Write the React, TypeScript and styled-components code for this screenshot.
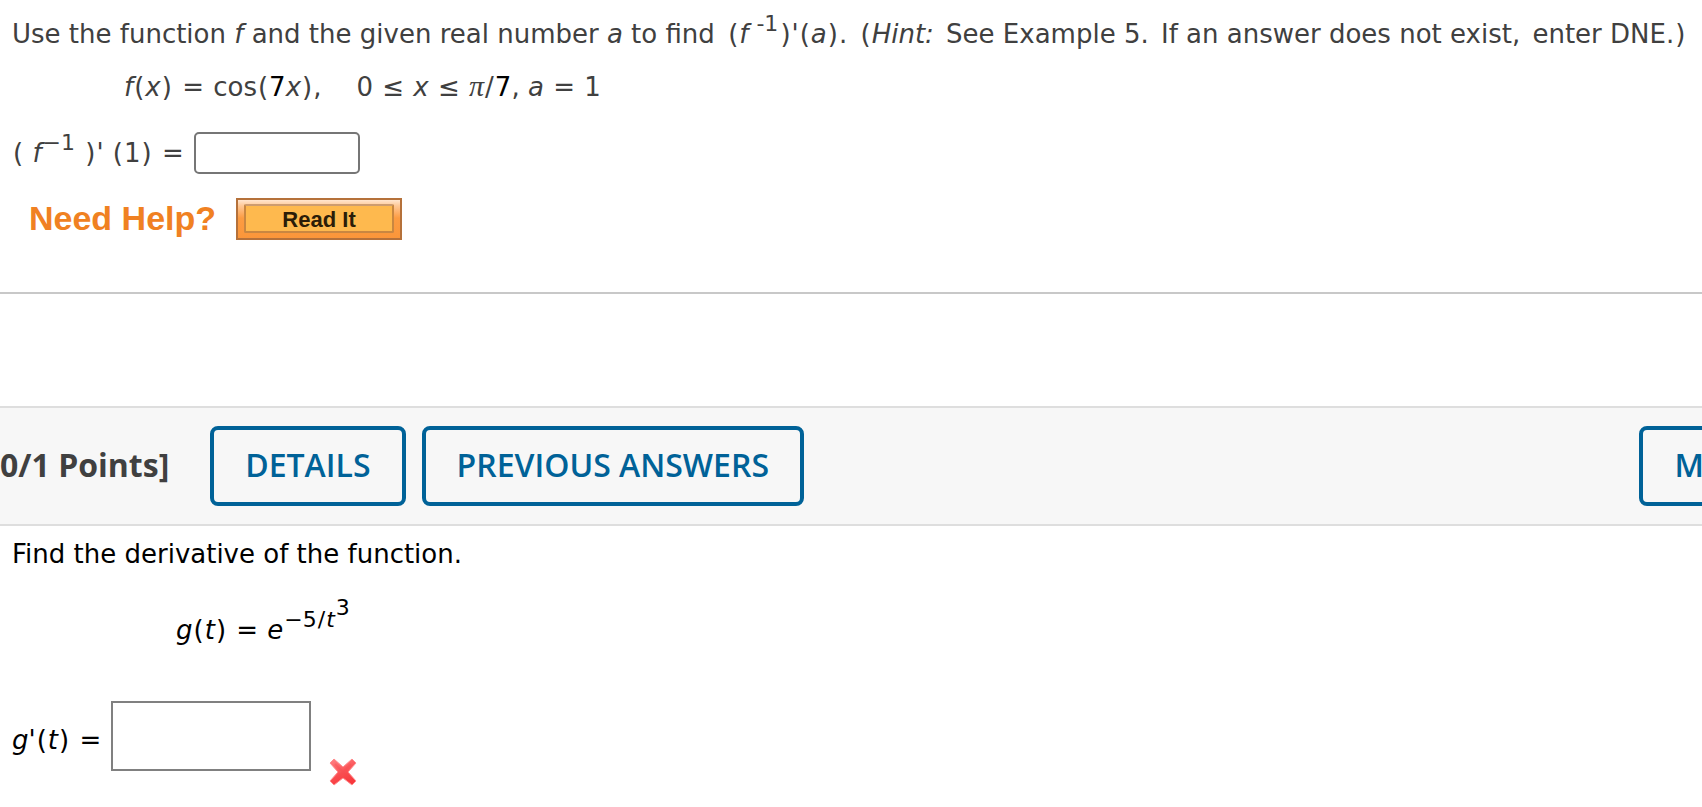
import React from 'react';
import styled, { createGlobalStyle } from 'styled-components';

const GlobalStyle = createGlobalStyle`
  *, *::before, *::after { box-sizing: border-box; }
  body {
    margin: 0;
    background: #fff;
    font-family: Verdana, "DejaVu Sans", sans-serif;
    font-size: 26px;
    line-height: 32px;
  }
`;

const Page = styled.main`
  display: flex;
  flex-direction: column;
`;

const Question = styled.section<{ $tone: string; $top: number }>`
  display: flex;
  flex-direction: column;
  padding: ${(p) => p.$top}px 12px 0;
  color: ${(p) => p.$tone};
`;

const Prompt = styled.p`
  margin: 0;
  white-space: nowrap;
`;

const Formula = styled.p<{ $top: number; $indent: number }>`
  margin: ${(p) => p.$top}px 0 0 ${(p) => p.$indent}px;
  white-space: nowrap;
`;

const Power = styled.sup`
  margin: 0 1px;
  font-size: 22px;
  line-height: 0;
  vertical-align: 12px;
`;

const Value = styled.span`
  color: #000;
`;

const Pi = styled.i`
  font-family: "Liberation Serif", serif;
  font-size: 30px;
  line-height: 0;
`;

/* Parentheses, slashes and relations get a little air, as in typeset maths. */
const Sign = styled.span`
  padding: 0 1px;
`;

const Sentence = styled.span`
  margin-left: 4px;
`;

const Domain = styled.span`
  margin-left: 35px;
`;

const AnswerRow = styled.div<{ $top: number }>`
  display: flex;
  align-items: center;
  gap: 9px;
  margin-top: ${(p) => p.$top}px;
`;

const AnswerLabel = styled.label`
  white-space: nowrap;
`;

const AnswerInput = styled.input`
  width: 166px;
  height: 42px;
  padding: 0 8px;
  border: 2px solid #767676;
  border-radius: 5px;
  background: #fff;
  font: inherit;
`;

const GradedRow = styled(AnswerRow)`
  align-items: flex-start;
`;

const GradedLabel = styled(AnswerLabel)`
  padding-top: 23px;
`;

const MathInput = styled(AnswerInput)`
  width: 200px;
  height: 70px;
  border-color: #808080;
  border-radius: 0;
`;

const WrongMark = styled.svg`
  width: 28px;
  height: 28px;
  margin: 57px 0 0 9px;
`;

const HelpRow = styled.div`
  display: flex;
  align-items: center;
  gap: 20px;
  margin-top: 24px;
  padding-left: 17px;
  font-family: Arial, "Liberation Sans", sans-serif;
  font-weight: 700;
`;

const HelpTitle = styled.span`
  padding-bottom: 2px;
  color: #f08122;
  font-size: 34px;
`;

const ReadButton = styled.button`
  display: flex;
  width: 166px;
  height: 42px;
  padding: 4px 6px 5px;
  border: 2px solid #b5713a;
  background: linear-gradient(#ffe6d0 0, #ffc794 6px, #fc9c42 18px, #fb963a 100%);
  font: inherit;
  cursor: pointer;
`;

const ReadFace = styled.span`
  flex: 1;
  height: 100%;
  border: 2px solid #c98741;
  border-top-color: #cd9c70;
  border-radius: 2px;
  background: #feb94e;
  color: #2b1d08;
  font-size: 22px;
  line-height: 28px;
  text-align: center;
`;

const Divider = styled.hr`
  width: 100%;
  height: 2px;
  margin: 52px 0 112px;
  border: 0;
  background: #c8c8c8;
`;

const Bar = styled.header`
  display: flex;
  align-items: center;
  gap: 16px;
  padding: 18px 0;
  overflow: hidden;
  border: solid #dedede;
  border-width: 2px 0;
  background: #f7f7f7;
  font-family: "Open Sans", sans-serif;
  font-size: 32px;
`;

const Points = styled.h2`
  margin: 0 25px 0 0;
  padding-bottom: 2px;
  color: #404040;
  font-size: 32px;
  font-weight: 700;
  white-space: nowrap;
`;

const BarButton = styled.button`
  flex: none;
  height: 80px;
  padding: 0 31px 2px;
  border: 4px solid #006298;
  border-radius: 8px;
  background: transparent;
  color: #006298;
  font: inherit;
  font-weight: 600;
  cursor: pointer;
`;

const EdgeButton = styled(BarButton)`
  margin-left: auto;
  margin-right: -38px;
  padding: 0 32px 2px;
`;

export default function App() {
  return (
    <Page>
      <GlobalStyle />
      <Question $tone="#404040" $top={18}>
        <Prompt>
          Use the function <i>f</i> and the given real number <i>a</i> to find{' '}
          <Sentence>
            <Sign>(</Sign><i>f</i><Power> -1</Power><Sign>)</Sign><i>'</i>
            <Sign>(</Sign><i>a</i><Sign>)</Sign>.
          </Sentence>{' '}
          <Sentence><Sign>(</Sign><i>Hint:</i></Sentence>{' '}
          <Sentence>See Example 5.</Sentence>{' '}
          <Sentence>If an answer does not exist,</Sentence>{' '}
          <Sentence>enter DNE.<Sign>)</Sign></Sentence>
        </Prompt>
        <Formula $top={21} $indent={112}>
          <i>f</i><Sign>(</Sign><i>x</i><Sign>)</Sign> <Sign>=</Sign> cos<Sign>(</Sign>
          <Value>7</Value><i>x</i><Sign>)</Sign>,
          <Domain>
            0 <Sign>≤</Sign> <i>x</i> <Sign>≤</Sign> <Pi>π</Pi><Sign>/</Sign><Value>7</Value>,{' '}
            <i>a</i> <Sign>=</Sign> 1
          </Domain>
        </Formula>
        <AnswerRow $top={29}>
          <AnswerLabel htmlFor="inverse">
            <Sign>(</Sign> <i>f</i><Power>−1</Power> <Sign>)</Sign><i>'</i>{' '}
            <Sign>(</Sign>1<Sign>)</Sign> <Sign>=</Sign>
          </AnswerLabel>
          <AnswerInput id="inverse" type="text" />
        </AnswerRow>
        <HelpRow>
          <HelpTitle>Need Help?</HelpTitle>
          <ReadButton type="button"><ReadFace>Read It</ReadFace></ReadButton>
        </HelpRow>
      </Question>
      <Divider />
      <Bar>
        <Points>0/1 Points]</Points>
        <BarButton type="button">DETAILS</BarButton>
        <BarButton type="button">PREVIOUS ANSWERS</BarButton>
        <EdgeButton type="button">M</EdgeButton>
      </Bar>
      <Question $tone="#000" $top={12}>
        <Prompt>Find the derivative of the function.</Prompt>
        <Formula $top={38} $indent={164}>
          <i>g</i><Sign>(</Sign><i>t</i><Sign>)</Sign> <Sign>=</Sign> <i>e</i>
          <Power>−5<Sign>/</Sign><i>t</i><Power>3</Power></Power>
        </Formula>
        <GradedRow $top={55}>
          <GradedLabel htmlFor="derivative">
            <i>g'</i><Sign>(</Sign><i>t</i><Sign>)</Sign> <Sign>=</Sign>
          </GradedLabel>
          <MathInput id="derivative" type="text" />
          <WrongMark viewBox="0 0 28 28" role="img" aria-label="Incorrect">
            <defs>
              <linearGradient id="mark" x1="0" y1="0" x2="0.4" y2="1">
                <stop offset="0" stopColor="#ff8587" />
                <stop offset="0.55" stopColor="#fb5558" />
                <stop offset="1" stopColor="#f8383c" />
              </linearGradient>
            </defs>
            <path
              d="M5 1 L14 9 L23 1 L27 5 L19 14 L27 23 L23 27 L14 20 L5 27 L1 23 L9 14 L1 5 Z"
              fill="url(#mark)"
              stroke="#ff8c8e"
              strokeWidth="1"
              strokeLinejoin="round"
            />
            <path d="M6 6 L22 22 M22 6 L6 22" stroke="#f5484c" strokeWidth="2" opacity="0.3" />
          </WrongMark>
        </GradedRow>
      </Question>
    </Page>
  );
}
